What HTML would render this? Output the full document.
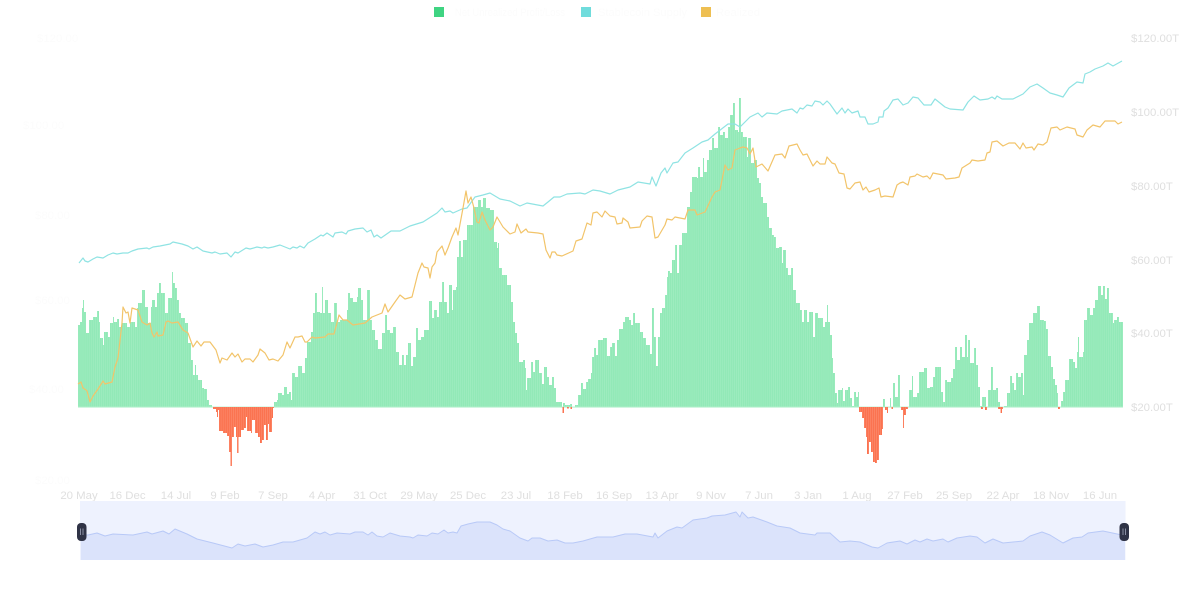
<!DOCTYPE html>
<html><head><meta charset="utf-8"><style>
html,body{margin:0;padding:0;background:#fff;width:1200px;height:589px;overflow:hidden}
svg{display:block;position:absolute;left:0;top:0}
text{font-family:"Liberation Sans",sans-serif;font-size:11.4px;fill:#dfdfdf}
.x{text-anchor:middle}
.f{fill:#fcfcfc}
</style></head><body>
<svg width="1200" height="589" viewBox="0 0 1200 589" xmlns="http://www.w3.org/2000/svg">
<defs>
<pattern id="g" width="2.03" height="10" patternUnits="userSpaceOnUse"><rect width="2.03" height="10" fill="#92e9b7"/><rect x="1.6" width=".43" height="10" fill="#a8eec6"/></pattern>
<pattern id="r" width="2.03" height="10" patternUnits="userSpaceOnUse"><rect width="2.03" height="10" fill="#fb7350"/><rect x="1.6" width=".43" height="10" fill="#fd9479"/></pattern>
</defs>
<rect x="434" y="7" width="10" height="10" fill="#3fd482"/>
<rect x="581" y="7" width="10" height="10" fill="#70dcdc"/>
<rect x="701" y="7" width="10" height="10" fill="#eebf52"/>
<text class="f" x="455" y="16" textLength="110" lengthAdjust="spacingAndGlyphs">Net Unrealized Profit/Loss</text>
<text class="f" x="598" y="16" textLength="89" lengthAdjust="spacingAndGlyphs">Stablecoin Supply</text>
<text class="f" x="716" y="16" textLength="44" lengthAdjust="spacingAndGlyphs">Realized</text>
<text class="f" x="37" y="42">$120.00</text>
<text class="f" x="23" y="129">$100.00</text>
<text class="f" x="35" y="219">$80.00</text>
<text class="f" x="35" y="304">$60.00</text>
<text class="f" x="29" y="393">$40.00</text>
<text class="f" x="35" y="484">$20.00</text>

<path fill="url(#g)" d="M78 407V325H80V322H82V308H83V300H84V312H86V333H89V320H93V317H97V311H99V322H100V338H103V345H104V332H108V337H110V323H113V317H114V322H117V319H119V327H122V323H127V327H130V322H135V327H137V308H138V303H142V290H145V307H148V323H151V307H152V300H155V307H157V293H159V283H161V293H165V313H168V298H172V272H173V283H175V288H177V300H179V313H181V318H185V323H188V343H191V360H193V375H195V365H196V375H198V380H202V388H204V389H207V400H209V405H212V407H274V402H277V400H278V393H282V395H284V387H287V394H289V392H291V400H292V373H295V377H298V366H302V373H305V358H307V342H311V332H313V313H315V293H317V312H320V313H322V287H323V313H325V300H328V313H331V322H334V303H337V322H340V320H347V310H348V293H350V298H353V302H357V297H358V288H361V300H363V320H367V290H370V320H372V330H375V340H378V349H382V333H385V315H387V330H390V333H393V327H396V352H399V365H402V355H404V365H406V355H408V343H411V366H413V357H416V328H418V340H421V337H424V330H429V301H432V318H434V310H437V317H439V302H442V282H444V302H447V313H449V285H452V310H453V290H456V287H457V257H459V241H461V257H463V240H467V225H473V207H478V200H481V207H483V198H486V208H490V210H494V242H497V248H498V243H499V268H502V275H507V285H508V285H511V302H513V322H515V333H517V343H519V362H523V360H525V368H526V390H527V378H531V362H533V372H535V360H539V373H542V384H544V367H547V377H549V385H552V377H554V388H556V402H562V407H563V403H565V405H570V404H572V407H575V405H578V395H581V383H583V389H586V382H588V379H591V373H592V357H594V348H596V355H598V340H603V338H607V356H610V347H612V343H615V356H617V340H619V329H623V322H625V317H629V320H631V325H633V313H635V323H638V323H640V332H643V338H646V345H650V354H652V308H654V337H656V366H658V337H660V313H662V308H665V295H667V277H668V271H670V273H672V260H675V245H677V273H679V245H682V233H687V207H690V192H692V177H697V178H698V167H700V177H703V158H704V172H707V160H709V150H712V138H714V148H718V127H720V135H723V132H725V138H728V127H730V115H733V103H735V130H738V132H739V98H741V132H743V137H747V157H748V138H751V163H754V160H757V178H759V183H761V197H763V203H767V217H769V228H772V235H774V237H776V248H779V247H782V263H783V250H786V268H788V275H791V268H793V290H796V303H800V310H802V322H804V310H807V322H809V312H813V337H815V313H818V318H823V327H825V322H827V305H828V322H830V335H832V358H833V373H835V393H837V403H838V390H842V388H843V401H845V390H848V387H850V398H852V406H854V392H856V397H858V392H859V407H883V399H885V407H890V398H891V407H893V383H895V397H898V375H900V407H909V390H912V376H913V397H917V393H919V372H924V368H927V388H930V387H933V377H935V367H941V392H943V402H945V380H947V382H951V378H953V369H955V347H957V360H960V347H962V357H965V335H967V357H968V340H970V363H974V348H976V365H978V387H980V406H982V397H986V407H988V390H991V367H993V390H996V388H998V402H1000V407H1004V406H1007V393H1010V376H1012V383H1014V390H1016V373H1018V377H1021V373H1023V395H1024V355H1027V340H1029V323H1033V313H1037V306H1040V320H1044V321H1046V329H1048V356H1051V367H1053V379H1055V385H1057V393H1058V407H1061V401H1063V392H1065V380H1069V359H1073V362H1075V368H1077V352H1078V337H1079V357H1083V352H1084V320H1087V308H1090V315H1093V308H1095V300H1098V286H1101V295H1103V286H1105V299H1107V288H1109V313H1113V323H1114V320H1117V317H1119V322H1123V407Z"/>
<rect x="78" y="406.6" width="1045" height="1" fill="#b3f0cd"/>

<path fill="url(#r)" d="M213 407V409H216V412H217V417H218V410H219V431H223V433H227V436H229V452H230.5V466H232V437H234V427H236V437H237V453H238.5V437H241V430H244V428H246V417H247V431H251V433H252V420H255V433H258V437H260V443H262V440H264V425H266V440H268V424H269V432H272V418H273V408H274V407Z"/>
<path fill="url(#r)" d="M859 407V412H862V418H864V428H866V437H867V454H869V442H871V452H873V462H875V463H877V460H879V435H882V429H883V407ZM885 407V410H887V413H888V407ZM891.5 407V409H893V407ZM901 407V410H903V428H904V415H906V409H908V407ZM981 407V409H983V407ZM985 407V410H987V407ZM998 407V409H1000.5V413H1002V409H1003V407ZM1058 407V409H1060V407ZM562.5 407V413H564V407ZM567 407V408.500H569V407ZM570.500 407V409H572V407Z"/>

<polyline fill="none" stroke="#8fe3e3" stroke-width="1.2" stroke-linejoin="round" points="79,263 83,258 85,261 88,262 93,259 97,257 103,258 108,255 113,253 117,254 123,253 128,253 132,251 138,249 147,248 149,249 153,247 160,246 170,244 173,242 182,244 188,246 193,249 197,247 203,251 212,253 215,252 220,254 227,253 231,257 235,252 238,253 246,248 250,249 257,247 262,248 264,247 268,248 273,247 280,245 290,249 293,247 297,248 300,246 304,248 308,243 315,239 321,235 323,236 327,233 333,237 335,233 342,232 346,234 348,231 355,229 363,228 367,232 371,230 374,237 377,235 381,238 391,231 400,231 410,226 423,222 437,213 442,208 445,212 450,211 453,213 462,209 467,208 475,197 483,195 490,193 500,199 510,201 520,206 527,203 543,206 548,202 554,197 560,197 567,194 580,193 585,194 593,190 600,191 610,194 618,190 630,187 638,182 650,184 652,177 656,186 661,173 665,168 667,173 673,163 678,162 685,153 693,148 702,142 708,140 715,134 728,124 735,124 740,127 750,117 758,113 762,117 767,113 777,114 782,111 792,109 797,113 800,108 803,109 807,105 812,106 815,101 820,102 823,105 827,101 830,104 837,114 842,108 845,113 848,109 852,113 858,111 860,117 865,117 868,124 873,124 878,122 879,117 883,117 884,111 888,108 893,100 898,99 903,105 908,103 913,97 918,98 924,105 931,105 935,99 940,103 945,107 950,109 963,110 968,102 974,96 980,100 988,99 992,97 995,99 997,96 1002,99 1013,99 1017,97 1023,94 1030,87 1037,84 1043,88 1050,93 1057,95 1063,97 1069,88 1077,82 1083,83 1085,74 1090,72 1095,69 1103,66 1108,63 1113,66 1122,61"/>

<polyline fill="none" stroke="#f2c46a" stroke-width="1.2" stroke-linejoin="round" points="78,384 81,382 83,388 86,390 87,391 90,402 93,396 98,389 103,381 105,384 112,382 115,367 118,358 122,323 123,307 126,313 128,312 130,323 132,308 138,310 142,322 147,325 150,323 152,333 154,337 157,332 158,336 163,335 166,322 168,321 172,323 178,322 183,330 188,333 193,347 197,341 201,346 204,342 210,342 216,350 220,363 222,358 227,360 232,353 235,357 238,354 242,362 245,359 250,359 253,362 258,355 260,349 265,353 269,360 273,359 278,361 283,355 287,342 290,348 295,337 298,337 302,336 305,342 307,342 312,337 315,338 325,337 328,334 334,334 337,323 339,315 343,320 347,320 353,325 365,323 372,317 382,313 385,304 388,312 395,302 400,295 405,299 412,297 418,273 422,263 424,267 428,268 430,278 432,267 435,263 437,252 442,246 445,255 448,248 452,237 456,228 458,235 463,208 466,191 468,203 471,197 474,208 477,222 479,223 482,212 485,220 490,230 493,227 497,217 503,227 510,234 515,232 517,224 521,233 526,229 528,232 538,233 543,234 546,250 550,258 552,252 555,252 557,255 562,256 573,251 576,241 582,239 587,223 591,225 593,213 597,212 602,217 605,211 610,216 615,217 617,224 622,223 623,218 628,222 630,228 640,227 642,221 647,216 652,217 655,238 658,237 665,225 667,219 672,220 675,217 685,219 688,210 695,210 697,215 705,212 712,197 715,192 720,190 725,165 728,170 732,168 735,150 740,148 743,147 747,148 750,154 753,148 756,167 762,164 768,171 775,155 782,154 785,158 789,146 797,144 800,150 803,155 807,154 813,166 817,161 820,164 825,164 827,157 832,163 835,164 839,173 844,174 847,188 850,189 855,183 860,182 863,190 866,187 869,192 875,190 879,188 881,197 885,196 893,197 897,185 900,183 903,182 908,185 910,177 915,176 917,174 923,177 927,176 930,179 933,173 943,175 946,179 955,178 959,177 962,168 970,163 972,160 978,161 985,160 987,153 990,152 992,142 997,141 1003,146 1009,143 1015,143 1020,149 1023,143 1026,148 1032,147 1034,150 1038,144 1043,145 1047,142 1051,128 1057,127 1060,130 1067,127 1075,129 1077,135 1083,137 1087,130 1093,125 1100,127 1105,121 1115,121 1118,124 1122,122"/>

<g class="lbl">
<text class="x" x="79" y="499">20 May</text>
<text class="x" x="127.500" y="499">16 Dec</text>
<text class="x" x="176" y="499">14 Jul</text>
<text class="x" x="225" y="499">9 Feb</text>
<text class="x" x="273" y="499">7 Sep</text>
<text class="x" x="322" y="499">4 Apr</text>
<text class="x" x="370" y="499">31 Oct</text>
<text class="x" x="419" y="499">29 May</text>
<text class="x" x="468" y="499">25 Dec</text>
<text class="x" x="516" y="499">23 Jul</text>
<text class="x" x="565" y="499">18 Feb</text>
<text class="x" x="614" y="499">16 Sep</text>
<text class="x" x="662" y="499">13 Apr</text>
<text class="x" x="711" y="499">9 Nov</text>
<text class="x" x="759" y="499">7 Jun</text>
<text class="x" x="808" y="499">3 Jan</text>
<text class="x" x="857" y="499">1 Aug</text>
<text class="x" x="905" y="499">27 Feb</text>
<text class="x" x="954" y="499">25 Sep</text>
<text class="x" x="1003" y="499">22 Apr</text>
<text class="x" x="1051" y="499">18 Nov</text>
<text class="x" x="1100" y="499">16 Jun</text>
<text x="1131" y="42">$120.00T</text>
<text x="1131" y="116">$100.00T</text>
<text x="1131" y="190">$80.00T</text>
<text x="1131" y="264">$60.00T</text>
<text x="1131" y="337">$40.00T</text>
<text x="1131" y="411">$20.00T</text>
</g>

<rect x="80" y="501" width="1045.500" height="59" fill="#eef2fe"/>
<path fill="#dbe3fb" d="M81 535 88 535 97 533 105 536 113 534 133 535 147 532 152 534 163 531 169 534 175 529 187 534 197 539 213 543 232 548 238 544 245 546 255 544 263 547 273 545 283 542 293 542 307 538 315 532 320 534 325 532 330 535 337 533 350 534 355 532 363 532 368 535 372 532 377 536 383 537 390 533 400 536 410 537 413 538 418 535 427 536 432 533 438 534 444 530 448 533 453 532 457 533 461 526 468 524 477 522 490 522 497 525 503 529 510 531 520 538 528 541 532 538 540 538 548 541 557 540 565 543 573 543 583 541 597 537 613 537 625 534 637 534 653 537 655 533 658 538 667 531 677 527 682 528 693 520 707 518 712 516 725 515 736 512 740 517 742 512 748 518 753 517 767 522 777 526 790 528 800 533 815 535 817 533 830 533 840 542 850 541 860 542 872 547 878 548 887 543 900 541 907 544 915 540 920 542 927 539 933 541 943 539 948 542 957 538 970 536 977 537 985 543 993 539 1003 543 1013 542 1023 541 1030 536 1042 532 1050 535 1063 543 1073 538 1082 537 1088 533 1103 531 1122 535 1125 535 1125 560 81 560Z"/>
<polyline fill="none" stroke="#b8c9f7" stroke-width="1" stroke-linejoin="round" points="81,535 88,535 97,533 105,536 113,534 133,535 147,532 152,534 163,531 169,534 175,529 187,534 197,539 213,543 232,548 238,544 245,546 255,544 263,547 273,545 283,542 293,542 307,538 315,532 320,534 325,532 330,535 337,533 350,534 355,532 363,532 368,535 372,532 377,536 383,537 390,533 400,536 410,537 413,538 418,535 427,536 432,533 438,534 444,530 448,533 453,532 457,533 461,526 468,524 477,522 490,522 497,525 503,529 510,531 520,538 528,541 532,538 540,538 548,541 557,540 565,543 573,543 583,541 597,537 613,537 625,534 637,534 653,537 655,533 658,538 667,531 677,527 682,528 693,520 707,518 712,516 725,515 736,512 740,517 742,512 748,518 753,517 767,522 777,526 790,528 800,533 815,535 817,533 830,533 840,542 850,541 860,542 872,547 878,548 887,543 900,541 907,544 915,540 920,542 927,539 933,541 943,539 948,542 957,538 970,536 977,537 985,543 993,539 1003,543 1013,542 1023,541 1030,536 1042,532 1050,535 1063,543 1073,538 1082,537 1088,533 1103,531 1122,535"/>

<rect x="77" y="523" width="9.500" height="18" rx="4" fill="#2f3346"/>
<rect x="80" y="528.500" width="1" height="6.500" fill="#8a8fa3"/><rect x="82.500" y="528.500" width="1" height="6.500" fill="#8a8fa3"/>
<rect x="1119.500" y="523" width="9.500" height="18" rx="4" fill="#2f3346"/>
<rect x="1122.500" y="528.500" width="1" height="6.500" fill="#8a8fa3"/><rect x="1125" y="528.500" width="1" height="6.500" fill="#8a8fa3"/>
</svg>
</body></html>
